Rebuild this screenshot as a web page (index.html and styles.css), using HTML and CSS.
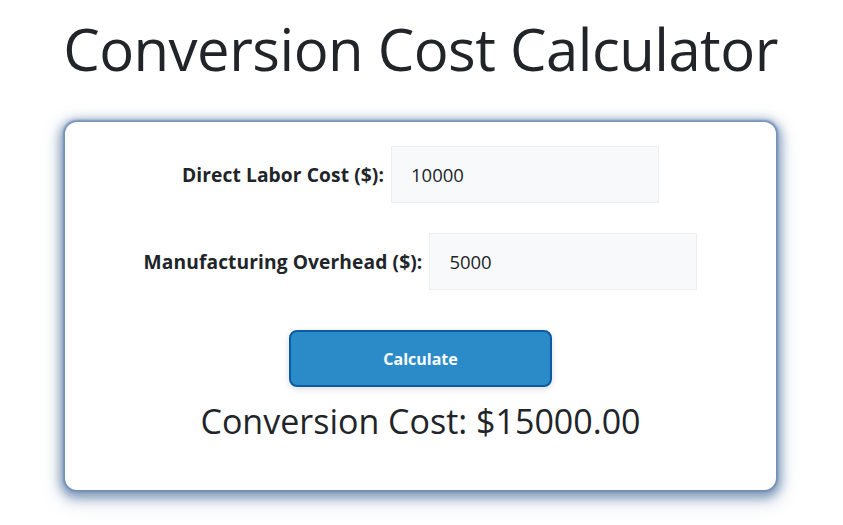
FILE: index.html
```html
<!DOCTYPE html>
<html>
<head>
<meta charset="utf-8">
<link rel="stylesheet" href="styles.css">
</head>
<body>
<h1 class="title">Conversion Cost Calculator</h1>
<div class="card">
  <div class="row">
    <label class="label" for="labor">Direct Labor Cost ($):</label>
    <input class="field" id="labor" type="text" value="10000">
  </div>
  <div class="row">
    <label class="label" for="overhead">Manufacturing Overhead ($):</label>
    <input class="field" id="overhead" type="text" value="5000">
  </div>
  <button class="btn">Calculate</button>
  <div class="result">Conversion Cost: $15000.00</div>
</div>
</body>
</html>
```
FILE: styles.css
```css
html, body {
  margin: 0;
  padding: 0;
  background: #ffffff;
}
body {
  font-family: "Open Sans", "Noto Sans", sans-serif;
  color: #212529;
  display: flex;
  flex-direction: column;
  align-items: center;
  padding-right: 2px;
  min-height: 525px;
  box-sizing: border-box;
}
.title {
  font-weight: 400;
  font-size: 58px;
  line-height: 70px;
  margin: 14px 0 0 0;
  letter-spacing: -0.5px;
}
.card {
  margin-top: 38px;
  width: 711px;
  height: 368px;
  box-sizing: border-box;
  background: #fff;
  border-radius: 12px;
  box-shadow: 0 0 2px 2px rgba(110, 140, 180, 0.9), 0 3px 10px 5px rgba(80, 115, 160, 0.6), 0 6px 18px 6px rgba(80, 115, 160, 0.25);
  padding-top: 24px;
  display: flex;
  flex-direction: column;
  align-items: center;
}
.row {
  display: flex;
  align-items: center;
  gap: 7px;
  margin-bottom: 30px;
}
.row:nth-child(2) {
  margin-bottom: 40px;
}
.label {
  font-weight: 700;
  font-size: 19.2px;
  letter-spacing: 0.1px;
}
.field {
  width: 268px;
  height: 57px;
  box-sizing: border-box;
  border: 1px solid #eceef0;
  background: #f8f9fa;
  padding: 0 19px;
  font-family: "Open Sans", "Noto Sans", sans-serif;
  font-size: 18.5px;
  color: #212529;
  outline: none;
}
.btn {
  width: 263px;
  height: 57px;
  border: 2px solid #0b5aa6;
  border-radius: 8px;
  background: #2b8bc9;
  color: #fff;
  font-family: "Open Sans", "Noto Sans", sans-serif;
  font-weight: 700;
  font-size: 16px;
  box-shadow: 0 2px 6px rgba(0, 0, 0, 0.15);
}
.result {
  margin-top: 11px;
  font-size: 34px;
  line-height: 46px;
}
```
